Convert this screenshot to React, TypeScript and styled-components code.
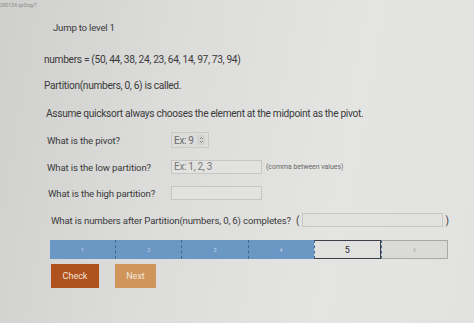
import React from 'react';
import styled, { createGlobalStyle } from 'styled-components';

const GlobalStyle = createGlobalStyle`
  html, body {
    margin: 0;
    padding: 0;
    width: 474px;
    height: 323px;
    overflow: hidden;
  }
  body {
    background: linear-gradient(100deg, #cfcfcd 0%, #dcdcda 35%, #e4e5e3 70%, #e2e3e1 100%);
    font-family: Roboto, "Liberation Sans", sans-serif;
    color: #3a3a3a;
  }
`;

const Page = styled.div`
  height: 323px;
  display: flex;
  flex-direction: column;
`;

const Breadcrumb = styled.div`
  font-size: 5px;
  color: #8a8a8a;
  padding: 2px 0 0 0;
  height: 10px;
`;

const Content = styled.div`
  padding-left: 44px;
  display: flex;
  flex-direction: column;
`;

const LevelTitle = styled.div`
  font-size: 9.6px;
  letter-spacing: -0.2px;
  padding-left: 9px;
  margin-top: 10px;
  height: 14px;
`;

const Para = styled.p<{ $indent?: number; $top: number }>`
  margin: ${p => p.$top}px 0 0 ${p => p.$indent ?? 0}px;
  font-size: 10.2px;
  line-height: 14px;
  letter-spacing: -0.33px;
`;

const QuestionRow = styled.div<{ $top: number; $indent: number }>`
  display: flex;
  align-items: center;
  margin-top: ${p => p.$top}px;
  padding-left: ${p => p.$indent}px;
  height: 16px;
`;

const QLabel = styled.span<{ $width?: number }>`
  font-size: 9.6px;
  width: ${p => (p.$width ? `${p.$width}px` : 'auto')};
  flex-shrink: 0;
  letter-spacing: -0.15px;
`;

const NumberBox = styled.div`
  width: 38px;
  height: 16px;
  box-sizing: border-box;
  background: #dcdcda;
  border: 1px solid #c9c9c7;
  display: flex;
  align-items: center;
  justify-content: space-between;
  padding: 0 3px 0 2px;
  font-size: 10px;
  letter-spacing: -0.3px;
  color: #6a6a6a;
`;

const Spinner = styled.span`
  width: 8px;
  height: 10px;
  display: flex;
  align-items: center;
  justify-content: center;
  background: #d2d2d0;
  border-radius: 2px;
`;

const TextBox = styled.div<{ $width: number }>`
  width: ${p => p.$width}px;
  height: 14px;
  box-sizing: border-box;
  background: #e2e2e0;
  border: 1px solid #c6c6c4;
  font-size: 10px;
  letter-spacing: -0.3px;
  color: #777;
  padding-left: 2px;
  line-height: 12px;
`;

const Hint = styled.span`
  font-size: 6.9px;
  color: #666;
  margin-left: 4px;
`;

const Paren = styled.span`
  font-size: 10px;
  margin: 0 3px 0 5px;
  & + div + & {
    margin: 0 0 0 2px;
  }
`;

const Progress = styled.div`
  margin: 12px 0 0 6px;
  width: 398px;
  height: 19px;
  display: flex;
`;

const Step = styled.div<{ $state: 'done' | 'current' | 'todo' }>`
  flex: 1;
  box-sizing: border-box;
  display: flex;
  align-items: center;
  justify-content: center;
  font-size: ${p => (p.$state === 'current' ? '9px' : '5.5px')};
  color: ${p => (p.$state === 'done' ? '#c4d4e8' : p.$state === 'current' ? '#2e2e2e' : '#b0b0ae')};
  background: ${p => (p.$state === 'done' ? '#6b97c4' : p.$state === 'current' ? '#e1e1df' : '#dadad8')};
  border: ${p => (p.$state === 'current' ? '1.5px solid #3d4048' : p.$state === 'todo' ? '1px solid #a9a9a7' : 'none')};
  & + & {
    border-left: ${p => (p.$state === 'done' ? '1px dashed #46688f' : undefined)};
  }
`;

const Buttons = styled.div`
  display: flex;
  gap: 16px;
  margin: 5px 0 0 7px;
`;

const Button = styled.button<{ $primary?: boolean }>`
  height: 24px;
  width: ${p => (p.$primary ? '48px' : '41px')};
  border: none;
  padding: 0;
  font-family: Roboto, "Liberation Sans", sans-serif;
  font-size: 9px;
  color: #f3e6dc;
  background: ${p => (p.$primary ? '#b0521d' : '#d0955a')};
`;

const App: React.FC = () => {
  return (
    <Page>
      <GlobalStyle />
      <Breadcrumb>280134.qx3zqy7</Breadcrumb>
      <Content>
        <LevelTitle>Jump to level 1</LevelTitle>
        <Para $top={17}>numbers = (50, 44, 38, 24, 23, 64, 14, 97, 73, 94)</Para>
        <Para $top={12}>Partition(numbers, 0, 6) is called.</Para>
        <Para $top={14} $indent={2}>Assume quicksort always chooses the element at the midpoint as the pivot.</Para>

        <QuestionRow $top={11} $indent={3}>
          <QLabel $width={124}>What is the pivot?</QLabel>
          <NumberBox>
            Ex: 9
            <Spinner>
              <svg width="5" height="8" viewBox="0 0 5 8">
                <path d="M1 3 L2.5 1.5 L4 3 M1 5 L2.5 6.5 L4 5" stroke="#777" strokeWidth="0.8" fill="none" />
              </svg>
            </Spinner>
          </NumberBox>
        </QuestionRow>

        <QuestionRow $top={11} $indent={3}>
          <QLabel $width={124}>What is the low partition?</QLabel>
          <TextBox $width={91}>Ex: 1, 2, 3</TextBox>
          <Hint>(comma between values)</Hint>
        </QuestionRow>

        <QuestionRow $top={10} $indent={4}>
          <QLabel $width={123}>What is the high partition?</QLabel>
          <TextBox $width={91} />
        </QuestionRow>

        <QuestionRow $top={11} $indent={7}>
          <QLabel>What is numbers after Partition(numbers, 0, 6) completes?</QLabel>
          <Paren>(</Paren>
          <TextBox $width={141} />
          <Paren>)</Paren>
        </QuestionRow>

        <Progress>
          <Step $state="done">1</Step>
          <Step $state="done">2</Step>
          <Step $state="done">3</Step>
          <Step $state="done">4</Step>
          <Step $state="current">5</Step>
          <Step $state="todo">6</Step>
        </Progress>

        <Buttons>
          <Button $primary>Check</Button>
          <Button>Next</Button>
        </Buttons>
      </Content>
    </Page>
  );
};

export default App;
